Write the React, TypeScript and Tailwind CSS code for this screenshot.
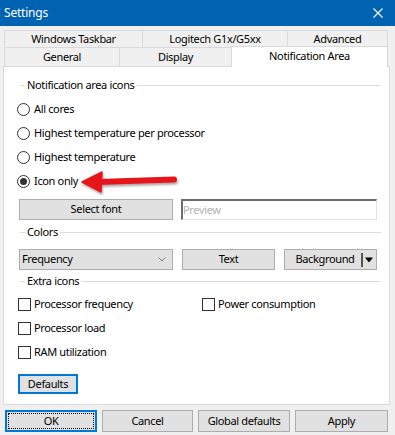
import React from "react";

function TopTab({ label, w, last }: { label: string; w: string; last?: boolean }) {
  return (
    <div
      className={`${w} flex h-full items-center justify-center border-t border-l border-[#d9d9d9] bg-[#f0f0f0] ${last ? "border-r" : ""}`}
    >
      {label}
    </div>
  );
}

function GroupHeader({ label }: { label: string }) {
  return (
    <div className="-mr-[3px] flex h-[16px] items-center">
      <div className="ml-[2px] h-px w-[5px] bg-[#dcdcdc]" />
      <span className="px-[2px]">{label}</span>
      <div className="h-px flex-1 bg-[#dcdcdc]" />
    </div>
  );
}

function Radio({ label, checked }: { label: string; checked?: boolean }) {
  return (
    <div className="-ml-px flex h-[24px] items-center">
      <div className="flex h-[13px] w-[13px] items-center justify-center rounded-full border border-[#333] bg-white">
        {checked && <div className="h-[7px] w-[7px] rounded-full bg-[#333]" />}
      </div>
      <span className="ml-[4px]">{label}</span>
    </div>
  );
}

function Check({ label }: { label: string }) {
  return (
    <div className="flex h-[24px] items-center">
      <div className="h-[13px] w-[13px] border border-[#333] bg-white" />
      <span className="ml-[3px]">{label}</span>
    </div>
  );
}

function Btn({ children, className = "" }: { children: React.ReactNode; className?: string }) {
  return (
    <div
      className={`flex items-center justify-center border border-[#adadad] bg-[#e1e1e1] ${className}`}
    >
      {children}
    </div>
  );
}

export default function App() {
  return (
    <div className="relative h-[435px] w-[395px] overflow-hidden bg-[#f0f0f0] font-['Noto_Sans',sans-serif] text-[11px] tracking-[-0.35px] text-black">
      {/* title bar */}
      <div className="flex h-[26px] items-center justify-between bg-[#0063b1] pl-[4px] pr-[12px] text-white">
        <span className="text-[12px] tracking-[-0.2px]">Settings</span>
        <svg width="10" height="10" viewBox="0 0 10 10">
          <path d="M0.5 0.5 L9.5 9.5 M9.5 0.5 L0.5 9.5" stroke="white" strokeWidth="1.1" />
        </svg>
      </div>

      {/* tabs */}
      <div className="ml-[4px] mt-[4px] flex h-[17px]">
        <TopTab label="Windows Taskbar" w="w-[138px]" />
        <TopTab label="Logitech G1x/G5xx" w="w-[145px]" />
        <TopTab label="Advanced" w="w-[101px]" last />
      </div>
      <div className="ml-[4px] flex h-[19px] items-start">
        <div className="flex h-full w-[115px] items-center justify-center border-t border-l border-[#d9d9d9] bg-[#f0f0f0]">
          General
        </div>
        <div className="flex h-full w-[112px] items-center justify-center border-t border-l border-[#d9d9d9] bg-[#f0f0f0]">
          Display
        </div>
        <div className="relative z-10 -mt-px flex h-[21px] w-[157px] items-start justify-center border-x border-t border-[#d9d9d9] bg-white pt-[1px]">
          Notification Area
        </div>
      </div>

      {/* panel */}
      <div className="ml-[3px] box-border h-[339px] w-[387px] border border-[#d9d9d9] bg-white pl-[14px] pr-[11px] pt-[10px]">
        <GroupHeader label="Notification area icons" />
        <div className="mt-[4px]">
          <Radio label="All cores" />
          <Radio label="Highest temperature per processor" />
          <Radio label="Highest temperature" />
          <Radio label="Icon only" checked />
        </div>

        <div className="ml-px mt-[6px] flex h-[21px] gap-[8px]">
          <Btn className="w-[154px]">Select font</Btn>
          <div className="flex w-[196px] items-center border-t-2 border-l-2 border-r border-b border-t-[#6d6d6d] border-l-[#6d6d6d] border-r-[#e3e3e3] border-b-[#e3e3e3] bg-white text-[#b4b4b4]">
            Preview
          </div>
        </div>

        <div className="mt-[4px]">
          <GroupHeader label="Colors" />
        </div>
        <div className="ml-px mt-[9px] flex h-[21px]">
          <div className="flex w-[154px] items-center justify-between border border-[#adadad] bg-[#e1e1e1] pl-[2px] pr-[6px]">
            <span>Frequency</span>
            <svg width="8" height="5" viewBox="0 0 8 5">
              <path d="M0.5 0.5 L4 4 L7.5 0.5" fill="none" stroke="#7a7a7a" strokeWidth="1" />
            </svg>
          </div>
          <Btn className="ml-[9px] w-[93px]">Text</Btn>
          <div className="ml-[9px] flex w-[93px] items-center border border-[#adadad] bg-[#e1e1e1]">
            <span className="flex-1 pl-[4px] text-center">Background</span>
            <div className="h-[14px] w-[2px] bg-[#555]" />
            <svg width="12" height="8" viewBox="0 0 12 8" className="mr-[1px]">
              <path d="M2 1.5 H10 L6 6.5 Z" fill="#000" />
            </svg>
          </div>
        </div>

        <div className="mt-[3px]">
          <GroupHeader label="Extra icons" />
        </div>
        <div className="mt-[3px] flex">
          <div className="w-[184px]">
            <Check label="Processor frequency" />
            <Check label="Processor load" />
            <Check label="RAM utilization" />
          </div>
          <div>
            <Check label="Power consumption" />
          </div>
        </div>

        <div className="mt-[10px] flex h-[20px] w-[60px] items-center justify-center border-2 border-[#0078d7] bg-[#e1e1e1]">
          Defaults
        </div>
      </div>

      {/* dialog buttons */}
      <div className="ml-[5px] mt-[5px] flex h-[22px] gap-[5px]">
        <div className="flex w-[92px] items-center justify-center border-2 border-[#0078d7] bg-[#e1e1e1] p-px">
          <div className="flex h-full w-full items-center justify-center border border-dotted border-black">
            OK
          </div>
        </div>
        <Btn className="w-[91px]">Cancel</Btn>
        <Btn className="w-[92px]">Global defaults</Btn>
        <Btn className="w-[93px]">Apply</Btn>
      </div>

      {/* annotation arrow */}
      <svg
        className="pointer-events-none absolute left-[78px] top-[166px]"
        width="106"
        height="32"
        viewBox="0 0 106 32"
      >
        <defs>
          <filter id="sh" x="-10%" y="-30%" width="130%" height="170%">
            <feDropShadow dx="1" dy="2" stdDeviation="1.2" floodColor="#000" floodOpacity="0.35" />
          </filter>
        </defs>
        <g filter="url(#sh)">
          <path d="M20 16 L96 13.5" stroke="#e4161b" strokeWidth="6" strokeLinecap="round" />
          <path d="M4 16 L24 6 L23 26 Z" fill="#e4161b" stroke="#e4161b" strokeWidth="1.5" strokeLinejoin="round" />
        </g>
      </svg>
    </div>
  );
}
